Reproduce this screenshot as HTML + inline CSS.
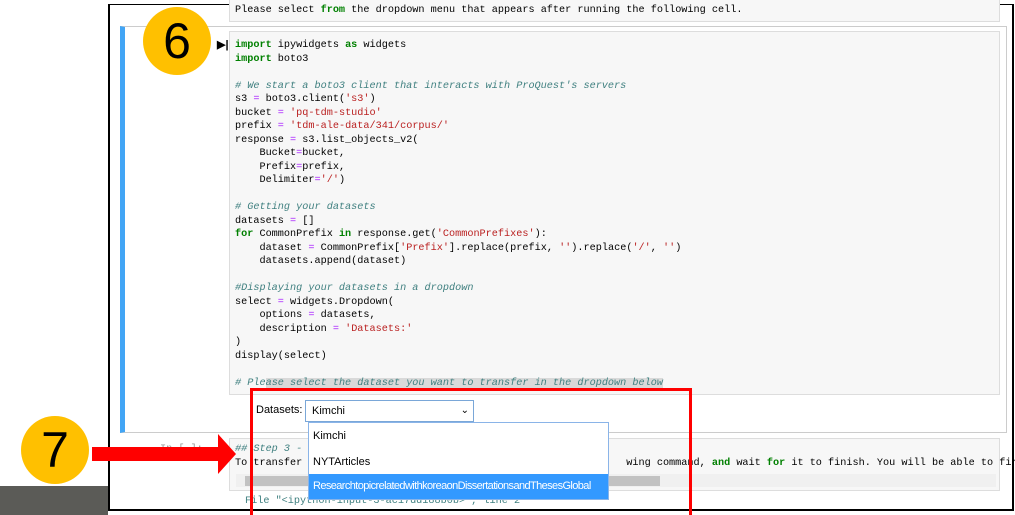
<!DOCTYPE html><html style="overflow:hidden;height:515px"><head><style>
body{margin:0;width:1015px;height:515px;background:#fff;position:relative;overflow:hidden;font-family:"Liberation Sans",sans-serif}
.a{position:absolute}
.code{font-family:"Liberation Mono",monospace;font-size:10.2px;line-height:13.5px;white-space:pre;color:#000}
.k{color:#008000;font-weight:bold}.s{color:#ba2121}.c{color:#408080;font-style:italic}.o{color:#aa22ff}
</style></head><body>
<div class="a" style="left:0;top:486px;width:108px;height:29px;background:#5b5b57"></div>
<div class="a" style="left:108px;top:4px;width:902px;height:504px;border:2px solid #000;border-top-width:1px;background:#fff"></div>
<div class="a" style="left:229px;top:-2px;width:769px;height:22px;border:1px solid #ddd;background:#f7f7f7"></div>
<div class="a code" style="left:235px;top:4px">Please select <span class="k">from</span> the dropdown menu that appears after running the following cell.</div>
<div class="a" style="left:120px;top:26px;width:881px;height:405px;border:1px solid #ccc;border-left:5px solid #42a5f5"></div>
<div class="a" style="left:229px;top:31px;width:769px;height:362px;border:1px solid #ddd;background:#f7f7f7"></div>
<div class="a code" style="left:235px;top:39px"><span class="k">import</span> ipywidgets <span class="k">as</span> widgets
<span class="k">import</span> boto3

<span class="c"># We start a boto3 client that interacts with ProQuest's servers</span>
s3 <span class="o">=</span> boto3.client(<span class="s">'s3'</span>)
bucket <span class="o">=</span> <span class="s">'pq-tdm-studio'</span>
prefix <span class="o">=</span> <span class="s">'tdm-ale-data/341/corpus/'</span>
response <span class="o">=</span> s3.list_objects_v2(
    Bucket<span class="o">=</span>bucket,
    Prefix<span class="o">=</span>prefix,
    Delimiter<span class="o">=</span><span class="s">'/'</span>)

<span class="c"># Getting your datasets</span>
datasets <span class="o">=</span> []
<span class="k">for</span> CommonPrefix <span class="k">in</span> response.get(<span class="s">'CommonPrefixes'</span>):
    dataset <span class="o">=</span> CommonPrefix[<span class="s">'Prefix'</span>].replace(prefix, <span class="s">''</span>).replace(<span class="s">'/'</span>, <span class="s">''</span>)
    datasets.append(dataset)

<span class="c">#Displaying your datasets in a dropdown</span>
select <span class="o">=</span> widgets.Dropdown(
    options <span class="o">=</span> datasets,
    description <span class="o">=</span> <span class="s">'Datasets:'</span>
)
display(select)

<span class="c"># Ple<span style="background:#d9d9d9">ase select the dataset you want to transfer in the dropdown below</span></span></div>
<div class="a" style="left:217px;top:38px;font-size:11px;font-weight:bold">▶|</div>
<div class="a" style="left:256px;top:404px;font-size:11px">Datasets:</div>
<div class="a" style="left:305px;top:400px;width:167px;height:20px;border:1px solid #7aa7d8;background:#fff;font-size:11px;line-height:20px;text-indent:6px">Kimchi<span class="a" style="right:4px;top:0;font-size:10px">⌄</span></div>
<div class="a" style="left:229px;top:438px;width:769px;height:51px;border:1px solid #ddd;background:#f7f7f7"></div>
<div class="a" style="left:236px;top:474px;width:760px;height:13px;background:#f0f0f0"></div>
<div class="a" style="left:245px;top:476px;width:415px;height:10px;background:#c2c2c2"></div>
<div class="a code" style="left:235px;top:443px"><span class="c">## Step 3 -</span>
To transfer                                                     wing command, <span class="k">and</span> wait <span class="k">for</span> it to finish. You will be able to fir</div>
<div class="a code" style="left:245px;top:495px;color:#408080">File "&lt;ipython-input-3-ac17dd188b0b&gt;", line 2</div>
<div class="a code" style="left:160px;top:443px;color:#999">In [ ]:</div>
<div class="a" style="left:308px;top:422px;width:299px;height:76px;border:1px solid #8ab4e8;background:#fff;font-size:11px"><div style="position:absolute;left:4px;top:7px">Kimchi</div><div style="position:absolute;left:4px;top:33px">NYTArticles</div><div style="position:absolute;left:0;top:51px;width:299px;height:25px;background:#3399ff;color:#fff;line-height:25px;text-indent:4px;letter-spacing:-0.6px">ResearchtopicrelatedwithkoreaonDissertationsandThesesGlobal</div></div>
<div class="a" style="left:250px;top:388px;width:436px;height:140px;border:3px solid #f00"></div>
<div class="a" style="left:143px;top:7px;width:68px;height:68px;border-radius:50%;background:#ffc000;text-align:center;font-size:50px;line-height:68px">6</div>
<div class="a" style="left:21px;top:416px;width:68px;height:68px;border-radius:50%;background:#ffc000;text-align:center;font-size:50px;line-height:68px">7</div>
<svg class="a" style="left:90px;top:432px" width="150" height="44"><polygon points="2,15 128,15 128,2 146,22 128,42 128,29 2,29" fill="#f00"/></svg>
</body></html>
